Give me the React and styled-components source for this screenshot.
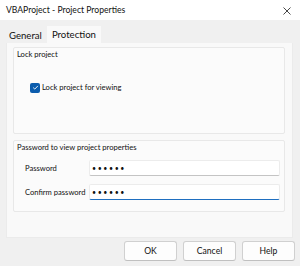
import React from "react";
import styled, { createGlobalStyle } from "styled-components";

const Global = createGlobalStyle`
  html, body { margin: 0; padding: 0; background: #f0f0f0; }
  * { box-sizing: border-box; }
`;

const Window = styled.div`
  width: 300px;
  height: 266px;
  display: flex;
  flex-direction: column;
  background: #f0f0f0;
  font-family: Lato, "Open Sans", sans-serif;
  font-size: 7.6px;
  line-height: 11px;
  color: #111;
  overflow: hidden;
`;

const TitleBar = styled.div`
  height: 20px;
  flex: none;
  background: #fff;
  display: flex;
  align-items: center;
  justify-content: space-between;
  padding: 1px 9px 0 6px;
  font-size: 8.6px;
`;

const Close = styled.svg`
  width: 8px;
  height: 8px;
`;

const TabRow = styled.div`
  display: flex;
  align-items: flex-end;
  height: 23px;
  padding-left: 4px;
  flex: none;
`;

const Tab = styled.div`
  height: ${(p) => (p.$active ? "17px" : "15px")};
  padding: 0 5px;
  display: flex;
  align-items: center;
  font-size: 9.6px;
  background: ${(p) => (p.$active ? "#f9f9f9" : "transparent")};
`;

const Panel = styled.div`
  margin: 0 7px 0 6px;
  height: 195px;
  flex: none;
  background: #f9f9f9;
  border: 1px solid #ebebeb;
  border-top: none;
  padding: 4px 7px 0 6px;
  display: flex;
  flex-direction: column;
  gap: 6px;
`;

const Group = styled.div`
  height: ${(p) => p.$h}px;
  background: #fbfbfb;
  border: 1px solid #e8e8e8;
  border-radius: 2px;
  padding: 1px 0 0 3px;
`;

const Legend = styled.div`
  height: 11px;
`;

const CheckRow = styled.label`
  display: flex;
  align-items: center;
  gap: 2px;
  margin: 22px 0 0 13px;
`;

const Box = styled.span`
  width: 10px;
  height: 10px;
  border-radius: 2px;
  background: #0b5cad;
  display: flex;
  align-items: center;
  justify-content: center;
`;

const Field = styled.div`
  display: grid;
  grid-template-columns: 64px 191px;
  align-items: center;
  white-space: nowrap;
  margin: ${(p) => p.$top}px 0 0 8px;
`;

const Input = styled.div`
  height: 16px;
  background: #fff;
  border: 1px solid #ececec;
  border-bottom: 1px solid ${(p) => (p.$focus ? "#1f6fc0" : "#c4c4c4")};
  border-radius: 2px;
  padding-left: 2px;
  display: flex;
  align-items: center;
  font-size: 7px;
  letter-spacing: 1.6px;
`;

const Buttons = styled.div`
  flex: 1;
  display: flex;
  justify-content: flex-end;
  align-items: flex-start;
  gap: 6px;
  padding: 3px 5px 0 0;
`;

const Button = styled.button`
  width: 53px;
  height: 20px;
  background: #fdfdfd;
  border: 1px solid #d0d0d0;
  border-bottom-color: #c0c0c0;
  border-radius: 3px;
  font-family: inherit;
  font-size: 8.6px;
  color: #111;
  padding: 0;
`;

export default function App() {
  return (
    <>
      <Global />
      <Window>
        <TitleBar>
          <span>VBAProject - Project Properties</span>
          <Close viewBox="0 0 8 8">
            <path d="M0.5 0.5 L7.5 7.5 M7.5 0.5 L0.5 7.5" stroke="#333" strokeWidth="0.9" />
          </Close>
        </TitleBar>
        <TabRow>
          <Tab>General</Tab>
          <Tab $active>Protection</Tab>
        </TabRow>
        <Panel>
          <Group $h={87}>
            <Legend>Lock project</Legend>
            <CheckRow>
              <Box>
                <svg width="7" height="7" viewBox="0 0 7 7">
                  <path d="M1.2 3.6 L2.8 5.1 L5.9 1.9" fill="none" stroke="#fff" strokeWidth="0.9" />
                </svg>
              </Box>
              <span>Lock project for viewing</span>
            </CheckRow>
          </Group>
          <Group $h={72}>
            <Legend>Password to view project properties</Legend>
            <Field $top={7}>
              <span>Password</span>
              <Input>••••••</Input>
            </Field>
            <Field $top={8}>
              <span>Confirm password</span>
              <Input $focus>••••••</Input>
            </Field>
          </Group>
        </Panel>
        <Buttons>
          <Button>OK</Button>
          <Button>Cancel</Button>
          <Button>Help</Button>
        </Buttons>
      </Window>
    </>
  );
}
